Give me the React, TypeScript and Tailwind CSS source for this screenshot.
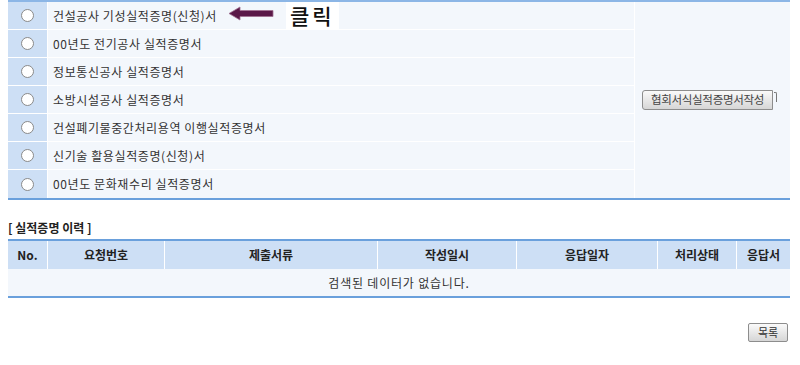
const forms = [
  "건설공사 기성실적증명(신청)서",
  "00년도 전기공사 실적증명서",
  "정보통신공사 실적증명서",
  "소방시설공사 실적증명서",
  "건설폐기물중간처리용역 이행실적증명서",
  "신기술 활용실적증명(신청)서",
  "00년도 문화재수리 실적증명서",
];

const cols = [
  { label: "No.", w: "w-[39px]" },
  { label: "요청번호", w: "w-[117px]" },
  { label: "제출서류", w: "w-[213px]" },
  { label: "작성일시", w: "w-[139px]" },
  { label: "응답일자", w: "w-[141px]" },
  { label: "처리상태", w: "w-[79px]" },
  { label: "응답서", w: "flex-1" },
];

const Radio = () => (
  <span className="block h-[13px] w-[13px] rounded-full border-[1.5px] border-[#8a8a8a] bg-white" />
);

export default function App() {
  return (
    <div className="h-[365px] w-[800px] bg-white font-['Noto_Sans_CJK_KR','Liberation_Sans',sans-serif] text-[12px] text-[#333]">
      {/* form list */}
      <div className="ml-[8px] flex w-[782px] border-t-2 border-b-2 border-t-[#8cb6e6] border-b-[#6aa0dc]">
        <div className="flex w-[626px] flex-col">
          {forms.map((f, i) => (
            <div
              key={f}
              className={`flex h-[28px] ${i < forms.length - 1 ? "border-b border-white" : ""}`}
            >
              <div className="flex w-[39px] items-center justify-center bg-[#cddff5]">
                <Radio />
              </div>
              <div className="relative flex flex-1 items-center border-l border-white bg-[#f3f7fc] pl-[5px]">
                <span className="leading-none tracking-[0.6px]">{f}</span>
                {i === 0 && (
                  <div className="absolute left-[180px] top-0 flex h-[27px] items-center gap-[12px]">
                    <svg width="46" height="15" viewBox="0 0 46 15" className="mb-[4px]">
                      <path
                        d="M1 7.5 L12 1 L12 4.5 L45 4.5 L45 10.5 L12 10.5 L12 14 Z"
                        fill="#5a1848"
                        stroke="#a07090"
                        strokeWidth="0.8"
                      />
                    </svg>
                    <span className="bg-white px-[4px] text-[21px] font-medium leading-[27px] tracking-[3px] text-[#111]">
                      클릭
                    </span>
                  </div>
                )}
              </div>
            </div>
          ))}
        </div>
        <div className="flex flex-1 items-center border-l border-white bg-[#f3f7fc] pl-[7px]">
          <button className="h-[20px] w-[131px] rounded-l-[3px] border border-[#8d8d8d] bg-gradient-to-b from-[#fafafa] to-[#d6d6d6] text-[11.5px] leading-none tracking-[-0.3px] text-[#444]">
            협회서식실적증명서작성
          </button>
          <span className="mb-[6px] ml-[1px] h-[10px] w-[3px] rounded-tr-[2px] border-r border-t border-[#777]" />
        </div>
      </div>

      {/* history */}
      <div className="ml-[8px] mt-[21px] w-[782px]">
        <div className="mb-[4px] text-[12px] font-bold leading-[14px] text-[#222]">[ 실적증명 이력 ]</div>
        <div className="border-t-2 border-b-2 border-t-[#6aa0dc] border-b-[#6aa0dc]">
          <div className="flex h-[28px] bg-[#cddff5]">
            {cols.map((c, i) => (
              <div
                key={c.label}
                className={`${c.w} flex items-center justify-center font-bold text-[#222] ${i > 0 ? "border-l border-white" : ""}`}
              >
                {c.label}
              </div>
            ))}
          </div>
          <div className="flex h-[27px] items-center justify-center bg-[#f3f7fc] tracking-[0.8px] text-[#333]">
            검색된 데이터가 없습니다.
          </div>
        </div>
      </div>

      <div className="mr-[12px] mt-[25px] flex justify-end">
        <button className="h-[19px] w-[40px] rounded-[2px] border border-[#8d8d8d] bg-gradient-to-b from-[#fafafa] to-[#d6d6d6] text-[11px] leading-none text-[#333]">
          목록
        </button>
      </div>
    </div>
  );
}
